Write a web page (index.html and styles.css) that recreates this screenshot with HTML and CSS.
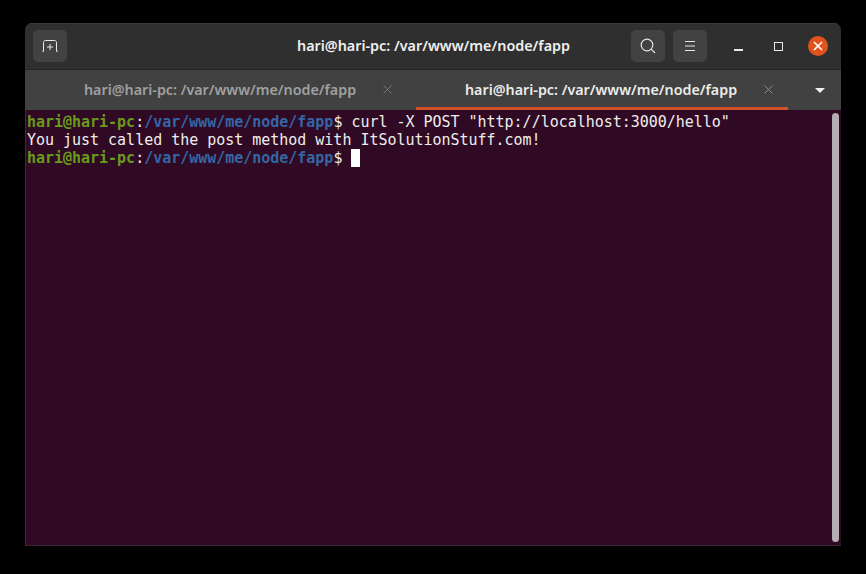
FILE: index.html
```html
<!DOCTYPE html>
<html lang="en">
<head>
<meta charset="utf-8">
<title>hari@hari-pc: /var/www/me/node/fapp</title>
<link rel="stylesheet" href="styles.css">
</head>
<body>
<div class="window">
  <header class="titlebar">
    <button class="btn newtab" aria-label="New tab">
      <svg width="16" height="16" viewBox="0 0 16 16" fill="none" stroke="#e8e8e6" stroke-width="1"><path d="M0.5 13.5H1.5V4.5C1.5 3 2.5 2.5 3.5 2.5H12.5C13.5 2.5 14.5 3 14.5 4.5V13.5H15.5"/><path d="M8 6V12M5 9H11"/></svg>
    </button>
    <div class="title">hari@hari-pc: /var/www/me/node/fapp</div>
    <div class="actions">
      <button class="btn" aria-label="Search">
        <svg width="16" height="16" viewBox="0 0 16 16" fill="none" stroke="#e4e4e2" stroke-width="1.2"><circle cx="7" cy="7" r="5.8"/><path d="M11.2 11.2L15 15"/></svg>
      </button>
      <button class="btn" aria-label="Menu">
        <svg width="12" height="12" viewBox="0 0 12 12" fill="none" stroke="#e8e8e6" stroke-width="1"><path d="M1 1.5H11M1 6H11M1 10.5H11"/></svg>
      </button>
    </div>
    <div class="wm">
      <span class="wm-item"><span class="min"></span></span>
      <span class="wm-item"><span class="max"></span></span>
      <span class="close">
        <svg width="10" height="10" viewBox="0 0 10 10" fill="none" stroke="#fff" stroke-width="1.6"><path d="M1 1L9 9M9 1L1 9"/></svg>
      </span>
    </div>
  </header>
  <nav class="tabbar">
    <div class="tab">
      <span class="tab-label">hari@hari-pc: /var/www/me/node/fapp</span>
      <svg class="tab-x" width="9" height="9" viewBox="0 0 9 9" fill="none" stroke="#777" stroke-width="1"><path d="M0.5 0.5L8.5 8.5M8.5 0.5L0.5 8.5"/></svg>
    </div>
    <div class="tab active">
      <span class="tab-label">hari@hari-pc: /var/www/me/node/fapp</span>
      <svg class="tab-x" width="9" height="9" viewBox="0 0 9 9" fill="none" stroke="#8a8a8a" stroke-width="1"><path d="M0.5 0.5L8.5 8.5M8.5 0.5L0.5 8.5"/></svg>
    </div>
    <div class="tabmenu"><span class="arrow"></span></div>
  </nav>
  <main class="terminal">
    <pre class="output"><span class="host">hari@hari-pc</span>:<span class="path">/var/www/me/node/fapp</span>$ curl -X POST "http://localhost:3000/hello"
You just called the post method with ItSolutionStuff.com!
<span class="host">hari@hari-pc</span>:<span class="path">/var/www/me/node/fapp</span>$ <span class="cursor"> </span></pre>
    <div class="scrollbar"></div>
  </main>
</div>
</body>
</html>
```

FILE: styles.css
```css
* { box-sizing: border-box; }
html, body { margin: 0; height: 100%; }
body {
  background: #000;
  padding: 23px 25px 28px 25px;
  overflow: hidden;
}
.window {
  width: 816px;
  height: 523px;
  display: flex;
  flex-direction: column;
  border-radius: 7px 7px 0 0;
  overflow: hidden;
  background: #2f2f2f;
}
.titlebar {
  height: 47px;
  flex: none;
  display: flex;
  align-items: center;
  padding: 0 13px 0 8px;
  background: #2f2f2f;
  border-bottom: 1px solid #262626;
  box-shadow: inset 0 1px 0 #3a3a3a;
}
.btn {
  width: 34px;
  height: 32px;
  padding: 0;
  border: 0;
  border-radius: 5px;
  background: #424242;
  display: flex;
  align-items: center;
  justify-content: center;
}
.title {
  flex: 1;
  text-align: center;
  padding-left: 169px;
  font: 600 14.35px/20px "Noto Sans", sans-serif;
  color: #f0f0ee;
  white-space: nowrap;
}
.actions { display: flex; gap: 8px; margin-right: 19px; }
.wm { display: flex; align-items: center; gap: 16px; }
.wm-item { width: 24px; height: 24px; display: flex; align-items: center; justify-content: center; }
.min { width: 9px; height: 1.5px; background: #e8e8e6; margin-top: 8px; }
.max { width: 9px; height: 9px; border: 1.5px solid #e8e8e6; }
.close {
  width: 20px;
  height: 20px;
  border-radius: 50%;
  background: #e1531e;
  display: flex;
  align-items: center;
  justify-content: center;
  margin-left: 2px;
}
.tabbar {
  height: 40px;
  flex: none;
  display: flex;
  background: #414141;
}
.tab {
  width: 372px;
  padding: 2px 0 0 49px;
  margin-left: 19px;
  display: flex;
  align-items: center;
  gap: 27px;
  border-bottom: 3px solid transparent;
  color: #a0a0a0;
  font: 600 14.3px/20px "Noto Sans", sans-serif;
  white-space: nowrap;
}
.tab:first-child { margin-left: 0; padding-left: 59px; }
.tab.active { color: #ececea; border-bottom-color: #d2512c; }
.tabmenu {
  flex: 1;
  display: flex;
  align-items: center;
  justify-content: center;
  padding-left: 11px;
}
.arrow {
  width: 0;
  height: 0;
  border-left: 5px solid transparent;
  border-right: 5px solid transparent;
  border-top: 5px solid #f0f0ee;
}
.terminal {
  flex: 1;
  display: flex;
  background: #300a24;
  padding: 3px 2px 3px 1px;
  border-left: 1px solid #3c2b37;
  border-bottom: 1px solid #3c2b37;
}
.output {
  flex: 1;
  margin: 0;
  font: 400 15px/18px "DejaVu Sans Mono", monospace;
  letter-spacing: -0.02px;
  color: #eeeeec;
}
.host { color: #6a9a1c; font-weight: 700; }
.path { color: #3465a4; font-weight: 700; }
.cursor { display: inline-block; width: 9px; height: 18px; background: #fff; vertical-align: top; }
.scrollbar {
  width: 7px;
  height: 429px;
  border-radius: 4px;
  background: #b4aeb2;
}
```
